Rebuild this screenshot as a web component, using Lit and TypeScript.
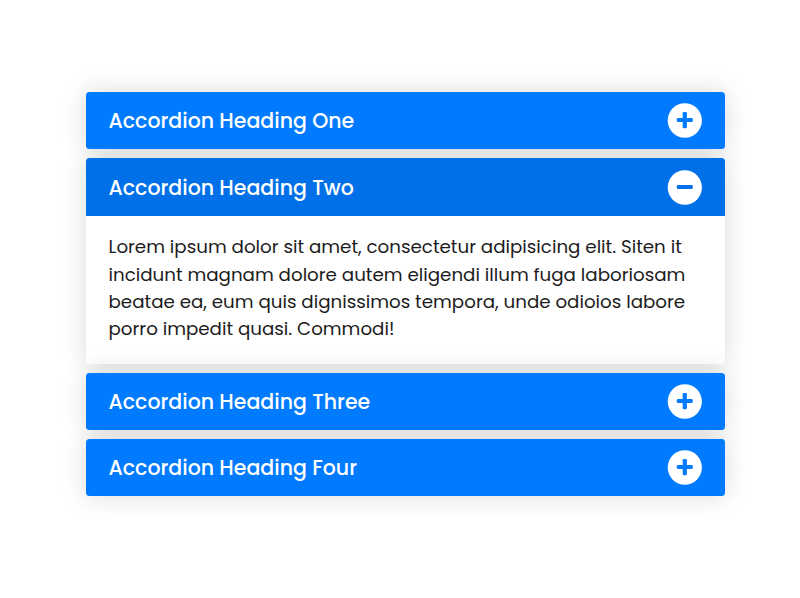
import { LitElement, html, svg, css } from "lit";
import { customElement, property, state } from "lit/decorators.js";

@customElement("toggle-icon")
class ToggleIcon extends LitElement {
  static styles = css`
    :host { display: block; flex: none; width: 35px; height: 35px; }
    svg { display: block; }
    .disc { fill: #fff; }
    .bar { fill: #007bff; }
    .bar.open { fill: #0070e8; }
  `;
  @property({ type: Boolean }) open = false;

  render() {
    return html`<svg width="35" height="35" viewBox="0 0 35 35">
      <ellipse class="disc" cx="17.8" cy="17.5" rx="17.1" ry="17.3"></ellipse>
      <rect class="bar ${this.open ? "open" : ""}" x="9.8" y="14.9" width="16" height="4.2" rx="1.3"></rect>
      ${this.open ? "" : svg`<rect class="bar" x="15.7" y="8.9" width="4.2" height="16.4" rx="1.3"></rect>`}
    </svg>`;
  }
}

interface Item { title: string; body: string[]; }

const LOREM = [
  "Lorem ipsum dolor sit amet, consectetur adipisicing elit. Siten it",
  "incidunt magnam dolore autem eligendi illum fuga laboriosam",
  "beatae ea, eum quis dignissimos tempora, unde odioios labore",
  "porro impedit quasi. Commodi!",
];

const ITEMS: Item[] = ["One", "Two", "Three", "Four"].map((n) => ({
  title: `Accordion Heading ${n}`,
  body: LOREM,
}));

@customElement("app-root")
class AppRoot extends LitElement {
  static styles = css`
    :host {
      display: block;
      box-sizing: border-box;
      height: 598px;
      padding: 92.4px 75.5px 0 85.5px;
      background: #fff;
      font-family: Poppins, Inter, "Open Sans", sans-serif;
    }
    .accordion { display: flex; flex-direction: column; gap: 9.2px; }
    .item { border-radius: 3.5px; box-shadow: 0 0 26px rgba(0, 0, 0, 0.15); }
    .head {
      position: relative;
      z-index: 1;
      display: flex;
      align-items: center;
      justify-content: space-between;
      box-sizing: border-box;
      height: 56.8px;
      padding: 0 22.6px 0 23px;
      border-radius: 3.5px;
      background: #007bff;
      color: #fff;
      font-size: 20.5px;
      font-weight: 500;
      cursor: pointer;
    }
    .head.open { height: 57.8px; background: #0070e8; border-radius: 3.5px 3.5px 0 0; }
    .body {
      box-sizing: border-box;
      height: 147.5px;
      padding: 17px 23px 0;
      border-radius: 0 0 3.5px 3.5px;
      background: #fff;
      color: #1c1c1c;
      font-size: 18.26px;
      line-height: 27.4px;
    }
    .line { display: block; white-space: nowrap; }
  `;
  @state() private active = 1;

  render() {
    return html`<div class="accordion">
      ${ITEMS.map((item, i) => {
        const open = i === this.active;
        return html`<section class="item">
          <div class="head ${open ? "open" : ""}" @click=${() => (this.active = open ? -1 : i)}>
            <span>${item.title}</span>
            <toggle-icon ?open=${open}></toggle-icon>
          </div>
          ${open
            ? html`<div class="body">${item.body.map((l) => html`<span class="line">${l}</span>`)}</div>`
            : ""}
        </section>`;
      })}
    </div>`;
  }
}
